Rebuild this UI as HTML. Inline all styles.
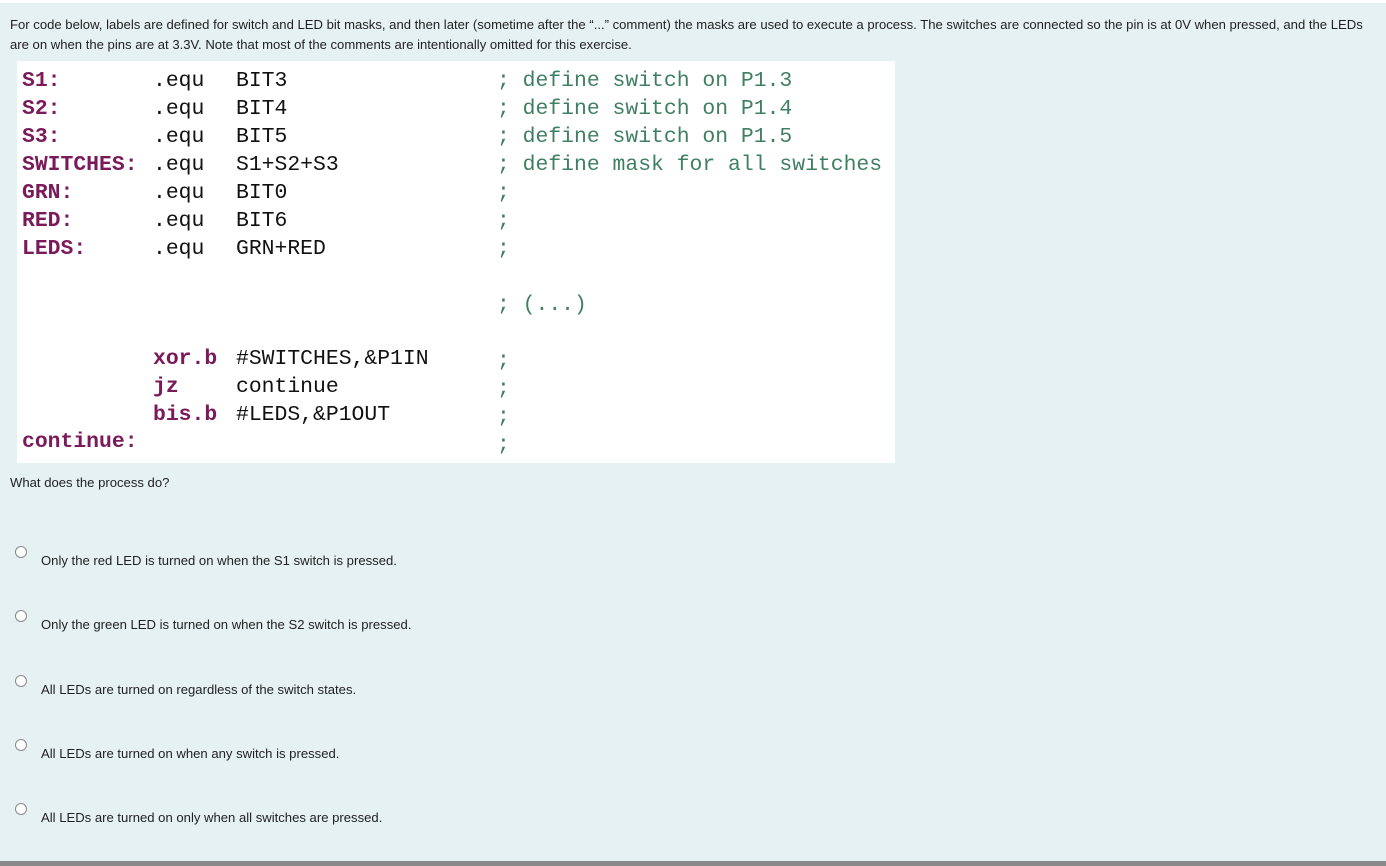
<!DOCTYPE html>
<html><head><style>
body{margin:0;width:1386px;height:866px;background:#fff;position:relative;overflow:hidden;font-family:"Liberation Sans",sans-serif;}
.bg{position:absolute;left:0;top:3px;width:1386px;height:859px;background:#e6f1f4;}
.bar{position:absolute;left:0;top:861px;width:1386px;height:5px;background:#8a8a8a;}
.p{position:absolute;left:10px;font-size:13.1px;color:#222;white-space:nowrap;}
.code{position:absolute;left:17px;top:61px;width:878px;height:402px;background:#fff;}
.t{position:absolute;font-family:"Liberation Mono",monospace;font-size:21.4px;line-height:28px;white-space:pre;color:#111;}
.l{color:#7b1a5a;font-weight:bold;}
.c{color:#3f7f62;}
.r{position:absolute;left:15px;width:10px;height:10px;border:1px solid #888;border-radius:50%;background:#fff;}
.o{position:absolute;left:41px;font-size:13.1px;color:#222;}
</style></head><body>
<div class="bg"></div>
<div class="p" style="top:17px">For code below, labels are defined for switch and LED bit masks, and then later (sometime after the “...” comment) the masks are used to execute a process. The switches are connected so the pin is at 0V when pressed, and the LEDs</div>
<div class="p" style="top:37px">are on when the pins are at 3.3V. Note that most of the comments are intentionally omitted for this exercise.</div>
<div class="code"></div>
<div class="t l" style="left:22px;top:67px">S1:
S2:
S3:
SWITCHES:
GRN:
RED:
LEDS:</div>
<div class="t" style="left:153px;top:67px">.equ
.equ
.equ
.equ
.equ
.equ
.equ</div>
<div class="t" style="left:236px;top:67px">BIT3
BIT4
BIT5
S1+S2+S3
BIT0
BIT6
GRN+RED</div>
<div class="t c" style="left:497px;top:67px">; define switch on P1.3
; define switch on P1.4
; define switch on P1.5
; define mask for all switches
;
;
;

; (...)

;
;
;
;</div>
<div class="t l" style="left:153px;top:345px">xor.b
jz
bis.b</div>
<div class="t" style="left:236px;top:345px">#SWITCHES,&amp;P1IN
continue
#LEDS,&amp;P1OUT</div>
<div class="t l" style="left:22px;top:428px">continue:</div>
<div class="p" style="top:475px">What does the process do?</div>
<div class="r" style="top:546px"></div><div class="o" style="top:553px">Only the red LED is turned on when the S1 switch is pressed.</div>
<div class="r" style="top:610px"></div><div class="o" style="top:617px">Only the green LED is turned on when the S2 switch is pressed.</div>
<div class="r" style="top:675px"></div><div class="o" style="top:682px">All LEDs are turned on regardless of the switch states.</div>
<div class="r" style="top:739px"></div><div class="o" style="top:746px">All LEDs are turned on when any switch is pressed.</div>
<div class="r" style="top:803px"></div><div class="o" style="top:810px">All LEDs are turned on only when all switches are pressed.</div>
<div class="bar"></div>
</body></html>
